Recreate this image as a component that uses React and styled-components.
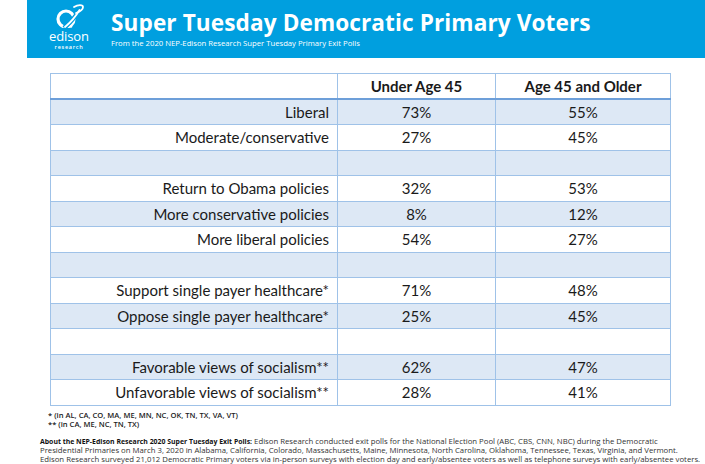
import React from 'react';
import styled, { createGlobalStyle } from 'styled-components';

const GlobalStyle = createGlobalStyle`
  html, body {
    margin: 0;
    padding: 0;
    background: #ffffff;
  }
`;

const Page = styled.div`
  width: 705px;
  height: 464px;
  overflow: hidden;
  background: #ffffff;
`;

const Banner = styled.header`
  margin-left: 27px;
  height: 58px;
  background-color: #009fdf;
  display: flex;
  align-items: center;
`;

const Logo = styled.div`
  width: 84px;
  display: flex;
  flex-direction: column;
  align-items: center;
  color: #ffffff;
  font-family: "Open Sans", sans-serif;
  margin-top: -4px;
`;

const LogoWord = styled.span`
  font-size: 13px;
  line-height: 16px;
  letter-spacing: -0.1px;
`;

const LogoSub = styled.span`
  font-size: 5.5px;
  line-height: 7px;
  letter-spacing: 0.7px;
  font-weight: 600;
`;

const Titles = styled.div`
  display: flex;
  flex-direction: column;
  color: #ffffff;
  font-family: "Open Sans", sans-serif;
  margin-top: -2px;
`;

const Title = styled.h1`
  margin: 0;
  font-size: 22.6px;
  line-height: 30px;
  font-weight: 700;
  letter-spacing: 0.1px;
`;

const Subtitle = styled.p`
  margin: 0;
  font-size: 7.7px;
  line-height: 10px;
`;

const Table = styled.table`
  margin: 15px 0 0 50px;
  width: 620px;
  border-collapse: collapse;
  font-family: Lato, "Liberation Sans", sans-serif;
  font-size: 15px;
  color: #1a1a1a;
  table-layout: fixed;
`;

const Row = styled.tr`
  height: 25.5px;
  background-color: ${props => (props.$shade ? '#dde8f5' : '#ffffff')};
`;

const HeadCell = styled.th`
  border: 1px solid #9fc2e8;
  border-bottom: 2px solid #6d9fd9;
  font-weight: 700;
  text-align: center;
  padding: 0;
`;

const LabelCell = styled.td`
  border: 1px solid #9fc2e8;
  text-align: right;
  padding: 0 8px 0 0;
`;

const ValueCell = styled.td`
  border: 1px solid #9fc2e8;
  text-align: center;
  padding: 0;
`;

const Notes = styled.div`
  margin: 5px 0 0 48px;
  font-family: "Open Sans", sans-serif;
  font-size: 7.6px;
  line-height: 9px;
  color: #222222;
  font-weight: 600;
`;

const About = styled.p`
  margin: 8px 0 0 40px;
  font-family: "Open Sans", sans-serif;
  font-size: 7.75px;
  line-height: 9px;
  color: #333333;
  white-space: nowrap;
`;

const AboutLead = styled.strong`
  font-size: 6.9px;
  font-weight: 700;
  color: #111111;
`;

const rows = [
  { label: 'Liberal', a: '73%', b: '55%' },
  { label: 'Moderate/conservative', a: '27%', b: '45%' },
  { label: '', a: '', b: '' },
  { label: 'Return to Obama policies', a: '32%', b: '53%' },
  { label: 'More conservative policies', a: '8%', b: '12%' },
  { label: 'More liberal policies', a: '54%', b: '27%' },
  { label: '', a: '', b: '' },
  { label: 'Support single payer healthcare*', a: '71%', b: '48%' },
  { label: 'Oppose single payer healthcare*', a: '25%', b: '45%' },
  { label: '', a: '', b: '' },
  { label: 'Favorable views of socialism**', a: '62%', b: '47%' },
  { label: 'Unfavorable views of socialism**', a: '28%', b: '41%' },
];

const EdisonMark = () => (
  <svg width="36" height="24" viewBox="0 0 36 24">
    <circle cx="15" cy="15" r="8" fill="none" stroke="#ffffff" strokeWidth="3.2" />
    <path
      d="M13 24 C 19 19, 25 12, 29 5"
      fill="none"
      stroke="#009fdf"
      strokeWidth="4.5"
    />
    <path
      d="M14 23 C 20 18, 25 12, 28.5 6"
      fill="none"
      stroke="#ffffff"
      strokeWidth="1.8"
      strokeLinecap="round"
    />
    <path
      d="M23 3 C 27 0.5, 32 0.5, 32 3 C 32 5.5, 28 8, 25 9"
      fill="none"
      stroke="#ffffff"
      strokeWidth="1.8"
      strokeLinecap="round"
    />
    <circle cx="20" cy="22.5" r="1.3" fill="#ffffff" />
  </svg>
);

const App = () => (
  <Page>
    <GlobalStyle />
    <Banner>
      <Logo>
        <EdisonMark />
        <LogoWord>edison</LogoWord>
        <LogoSub>research</LogoSub>
      </Logo>
      <Titles>
        <Title>Super Tuesday Democratic Primary Voters</Title>
        <Subtitle>From the 2020 NEP-Edison Research Super Tuesday Primary Exit Polls</Subtitle>
      </Titles>
    </Banner>

    <Table>
      <colgroup>
        <col style={{ width: 287 }} />
        <col style={{ width: 158 }} />
        <col style={{ width: 175 }} />
      </colgroup>
      <thead>
        <Row>
          <HeadCell />
          <HeadCell>Under Age 45</HeadCell>
          <HeadCell>Age 45 and Older</HeadCell>
        </Row>
      </thead>
      <tbody>
        {rows.map((row, i) => (
          <Row key={i} $shade={i % 2 === 0}>
            <LabelCell>{row.label}</LabelCell>
            <ValueCell>{row.a}</ValueCell>
            <ValueCell>{row.b}</ValueCell>
          </Row>
        ))}
      </tbody>
    </Table>

    <Notes>
      * (in AL, CA, CO, MA, ME, MN, NC, OK, TN, TX, VA, VT)
      <br />
      ** (in CA, ME, NC, TN, TX)
    </Notes>

    <About>
      <AboutLead>About the NEP-Edison Research 2020 Super Tuesday Exit Polls:</AboutLead> Edison Research conducted exit polls for the National Election Pool (ABC, CBS, CNN, NBC) during the Democratic
      <br />
      Presidential Primaries on March 3, 2020 in Alabama, California, Colorado, Massachusetts, Maine, Minnesota, North Carolina, Oklahoma, Tennessee, Texas, Virginia, and Vermont.
      <br />
      Edison Research surveyed 21,012 Democratic Primary voters via in-person surveys with election day and early/absentee voters as well as telephone surveys with early/absentee voters.
    </About>
  </Page>
);

export default App;
